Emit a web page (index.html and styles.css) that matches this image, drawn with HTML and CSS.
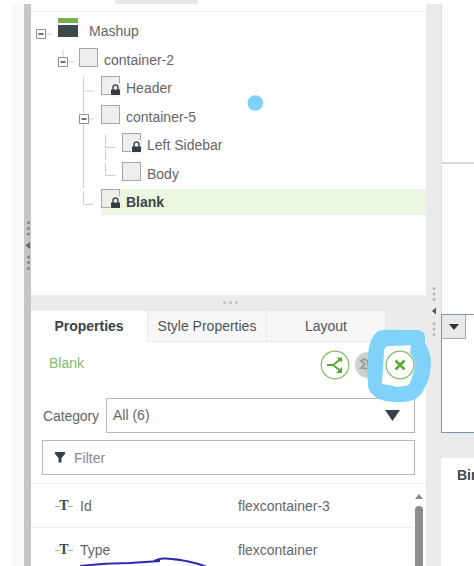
FILE: index.html
```html
<!DOCTYPE html>
<html lang="en">
<head>
    <meta charset="UTF-8">
    <meta name="viewport" content="width=device-width, initial-scale=1.0">
    <title>Mashup Builder</title>
    <link rel="stylesheet" href="styles.css">
</head>
<body>
    <div class="top-strip"><div class="top-tab"></div></div>
    <div class="builder">
        <div class="rail"></div>
        <div class="left-bar">
            <svg width="7" height="50" viewBox="0 0 7 50">
                <g fill="#858585"><circle cx="4.5" cy="1.5" r="1.5"/><circle cx="4.5" cy="7.5" r="1.5"/><circle cx="4.5" cy="13" r="1.5"/><circle cx="4.5" cy="36" r="1.5"/><circle cx="4.5" cy="41.5" r="1.5"/><circle cx="4.5" cy="47.5" r="1.5"/></g>
                <path d="M6 21v7L1.5 24.5z" fill="#666"/>
            </svg>
        </div>
        <div class="panel">
            <div class="tree">
                <!-- connector lines and expanders -->
                <svg class="branches" width="120" height="215" viewBox="31 0 120 215" fill="none">
                    <path d="M46 34h6M63 50v7M68 62h6M83.5 77v36M83.5 91h10M89 119h5M83.5 124v64M83.5 191v13.5h10M105.5 134v26M105.5 147.5h10M105.5 163v12.5h10" stroke="#cfcfcf"/>
                    <g fill="#fff" stroke="#909090"><path d="M36.5 29.5h9v9h-9zM58.5 57.5h9v9h-9zM79.5 114.5h9v9h-9z"/></g>
                    <path d="M38.5 34h5M60.5 62h5M81.5 119h5" stroke="#444" stroke-width="1.3"/>
                </svg>
                <div class="node root">
                    <svg width="20" height="20"><path d="M0 0h20v5H0z" fill="#78ad50"/><path d="M0 7h20v12H0z" fill="#3c484c"/></svg>
                    <span>Mashup</span>
                </div>
                <div class="node level-1"><i class="box"></i><span>container-2</span></div>
                <div class="node level-2"><i class="box"><svg class="lock" width="11" height="14"><path d="M3 7V4.5a2.5 2.5 0 0 1 5 0V7" fill="none" stroke="#444b50" stroke-width="1.5"/><path d="M1 6.5h9V12H1z" fill="#363d42"/></svg></i><span>Header</span></div>
                <div class="node level-2"><i class="box"></i><span>container-5</span></div>
                <div class="node level-3"><i class="box"><svg class="lock" width="11" height="14"><path d="M3 7V4.5a2.5 2.5 0 0 1 5 0V7" fill="none" stroke="#444b50" stroke-width="1.5"/><path d="M1 6.5h9V12H1z" fill="#363d42"/></svg></i><span>Left Sidebar</span></div>
                <div class="node level-3"><i class="box"></i><span>Body</span></div>
                <div class="node level-2 selected"><i class="box"><svg class="lock" width="11" height="14"><path d="M3 7V4.5a2.5 2.5 0 0 1 5 0V7" fill="none" stroke="#444b50" stroke-width="1.5"/><path d="M1 6.5h9V12H1z" fill="#363d42"/></svg></i><span>Blank</span></div>
            </div>
            <div class="splitter"><i></i><i></i><i></i></div>
            <div class="tabs">
                <div class="tab active">Properties</div>
                <div class="tab">Style Properties</div>
                <div class="tab">Layout</div>
            </div>
            <div class="widget">
                <span class="widget-name">Blank</span>
                <svg width="96" height="32" viewBox="320 349 96 32" fill="none">
                    <circle cx="335" cy="365" r="13.8" fill="#fff" stroke="#83bd68" stroke-width="1.2"/>
                    <path d="M327 365h6l7-5.5M333 365l7 5.5" stroke="#55a630" stroke-width="1.8"/>
                    <path d="M336.5 357.5h5.5v5zM342 367v6h-6z" fill="#55a630"/>
                    <circle cx="368" cy="365" r="13" fill="#d0d0d0"/>
                    <path d="M361 361l3-2 4 2v8l-7-1 4-4z" stroke="#999" stroke-width="1.8"/>
                    <circle cx="400" cy="365" r="13.8" fill="#fff" stroke="#83bd68" stroke-width="1.2"/>
                    <path d="M395.5 360.5l9 9M404.5 360.5l-9 9" stroke="#5fab38" stroke-width="2.8"/>
                </svg>
            </div>
            <div class="category">
                <span>Category</span>
                <div class="select">All (6)<svg width="15" height="11"><path d="M0 0h15L7.5 11z" fill="#354244"/></svg></div>
            </div>
            <div class="filter">
                <svg width="10" height="11"><path d="M0 0h10v2L6.5 6v4.5h-3V6L0 2z" fill="#374044"/></svg>
                <span>Filter</span>
            </div>
            <div class="properties">
                <div class="rows">
                    <div class="row"><div class="key"><b class="type-icon">T</b>Id</div><div>flexcontainer-3</div></div>
                    <div class="row"><div class="key"><b class="type-icon">T</b>Type</div><div>flexcontainer</div></div>
                </div>
                <div class="scrollbar">
                    <svg width="8" height="5"><path d="M0 5h8L4 0z" fill="#888"/></svg>
                    <div class="thumb"></div>
                </div>
            </div>
        </div>
        <div class="divider">
            <svg width="8" height="50" viewBox="0 0 8 50">
                <g fill="#b5b5b5"><circle cx="4" cy="1.5" r="1.5"/><circle cx="4" cy="7" r="1.5"/><circle cx="4" cy="12.5" r="1.5"/><circle cx="4" cy="36.5" r="1.5"/><circle cx="4" cy="42" r="1.5"/><circle cx="4" cy="47.5" r="1.5"/></g>
                <path d="M6 20.5v7L2 24z" fill="#555"/>
            </svg>
        </div>
        <div class="canvas">
            <div class="ruler"></div>
            <div class="blank-area"></div>
            <div class="container-box"><div class="menu-button"><svg width="10" height="6"><path d="M0 0h10L5 6z" fill="#333"/></svg></div></div>
            <div class="gap"></div>
            <div class="bindings">Bindings</div>
        </div>
    </div>
    <!-- pen marks over the page -->
    <svg class="marks" width="474" height="566" fill="none">
        <circle cx="255.3" cy="103" r="7.8" fill="#80d2fb"/>
        <path fill-rule="evenodd" fill="#80d2fb" d="M378 331Q385 329 397 330L418 330Q426 332 425 338L425 343Q431 353 431 364Q430 379 425 387Q421 397 413 400Q404 403 394 402Q379 401 373 395Q367 390 368 382Q366 372 368 363Q367 340 378 331ZM388 346Q384 347 384 352L382 384Q391 385 397 387L408 385.500Q411 382 412 377Q415 370 414.500 364Q414 357 410 353L411 345Q397 346 388 346Z"/>
        <path d="M80 566Q105 563 130 563L160 561M153 562Q158 558 166 558.5Q190 560 207 567" stroke="#3028ad" stroke-width="2"/>
    </svg>
</body>
</html>
```

FILE: styles.css
```css
* {
    box-sizing: border-box;
}
body {
    margin: 0;
    height: 566px;
    overflow: hidden;
    position: relative;
    background: #fff;
    color: #666;
    font-family: "Liberation Sans", Arial, sans-serif;
    font-size: 14px;
    line-height: 20px;
}
svg {
    display: block;
    flex-shrink: 0;
}
.top-strip {
    height: 4px;
    padding-left: 115px;
}
.top-tab {
    width: 83px;
    height: 4px;
    background: #e8e8e8;
}
.builder {
    display: flex;
    height: 562px;
    padding-left: 12px;
}
.rail {
    width: 12px;
    background: #fafafa;
}
.left-bar {
    width: 7px;
    padding-top: 217px;
    background: #c6c6c6;
}
.panel {
    width: 395px;
    background: #fefefe;
}

/* Widget tree */
.tree {
    position: relative;
    height: 291px;
    padding-top: 13px;
}
.tree::before {
    content: "";
    position: absolute;
    top: 7px;
    width: 100%;
    height: 1px;
    background: #f0f0f0;
}
.branches {
    position: absolute;
    top: -4px;
    left: 0;
}
.node {
    position: relative;
    display: flex;
    height: 28.5px;
    gap: 6px;
}
.node span {
    padding-top: 4px;
}
.root {
    padding-left: 27px;
    gap: 11px;
}
.root svg {
    margin-top: 1px;
}
.level-1 {
    margin-left: 48px;
}
.level-2 {
    margin-left: 70px;
}
.level-3 {
    margin-left: 91px;
}
.box {
    position: relative;
    width: 19px;
    height: 19px;
    margin-top: 2px;
    border: 1px solid #a5a5a5;
    background: #eeeeef;
}
.lock {
    position: absolute;
    right: -2px;
    bottom: -3px;
    background: #f4f4f4;
}
.selected {
    height: 26px;
    margin-top: 1px;
    background: #ebf7e0;
    color: #3b4447;
    font-weight: bold;
}
.selected .box {
    margin-top: 0;
}
.selected .lock {
    background: #ebf7e0;
}
.selected span {
    padding-top: 3px;
}

/* Properties panel */
.splitter {
    display: flex;
    justify-content: center;
    gap: 3px;
    height: 16px;
    padding: 6px 0 0 3px;
    background: #ebebeb;
}
.splitter i {
    width: 3px;
    height: 3px;
    border-radius: 50%;
    background: #bcbcbc;
}
.tabs {
    display: flex;
    height: 31px;
    gap: 1px;
    background: #ebebeb;
}
.tab {
    width: 118px;
    height: 30px;
    padding-top: 5px;
    background: #f7f7f7;
    color: #505557;
    text-align: center;
}
.tab.active {
    width: 116px;
    height: 31px;
    background: #fefefe;
    color: #3b4447;
    font-weight: bold;
}
.widget {
    display: flex;
    justify-content: space-between;
    height: 56px;
    padding: 7px 10px 0 18px;
}
.widget-name {
    padding-top: 4px;
    color: #82bb6c;
}
.category {
    display: flex;
    align-items: center;
    justify-content: space-between;
    height: 35px;
    margin: 0 11px 0 12px;
}
.category > span {
    letter-spacing: -0.1px;
}
.select {
    display: flex;
    align-items: center;
    justify-content: space-between;
    width: 309px;
    height: 35px;
    padding: 0 14px 1px 6px;
    border: 1px solid #b8b8b8;
}
.filter {
    display: flex;
    align-items: center;
    gap: 9px;
    height: 35px;
    margin: 7px 11px 0;
    padding-left: 12px;
    border: 1px solid #b8b8b8;
    color: #8a8a8a;
}
.properties {
    display: flex;
    height: 83px;
    margin-top: 8px;
    border-top: 1px solid #eaeaea;
    overflow: hidden;
}
.rows {
    width: 382px;
}
.row {
    display: grid;
    grid-template-columns: 183px 1fr;
    align-items: center;
    height: 44px;
    padding-left: 24px;
    border-bottom: 1px solid #eee;
}
.key {
    display: flex;
    gap: 7px;
}
.type-icon {
    width: 18px;
    color: #3f484b;
    font-family: "Liberation Serif", serif;
    font-size: 14px;
    text-align: center;
    background: linear-gradient(#98bd83, #98bd83) 0 10px / 5px 1px no-repeat, linear-gradient(#98bd83, #98bd83) 100% 10px / 5px 1px no-repeat;
}
.scrollbar {
    display: flex;
    flex-direction: column;
    align-items: center;
    gap: 7px;
    width: 12px;
    padding-top: 10px;
}
.thumb {
    flex: 1;
    width: 8px;
    border-radius: 4px 4px 0 0;
    background: #8c8c8c;
}

/* Canvas on the right */
.divider {
    width: 15px;
    padding: 283px 0 0 4px;
    background: #ebebeb;
}
.canvas {
    flex: 1;
    min-width: 0;
    overflow: hidden;
    background: #fff;
}
.ruler {
    height: 160px;
    border-bottom: 2px solid #d8d8d8;
}
.ruler,
.blank-area {
    border-left: 1px solid #dedede;
}
.blank-area {
    height: 150px;
}
.container-box {
    height: 119px;
    border: 1px solid #7d94b5;
    border-right: 0;
}
.menu-button {
    display: flex;
    align-items: center;
    justify-content: center;
    width: 24px;
    height: 24px;
    border: solid #aaa;
    border-width: 0 1px 1px 0;
    background: #e9e9e9;
}
.gap {
    height: 25px;
    background: #ebebeb;
}
.bindings {
    padding: 7px 0 0 16px;
    color: #3f484b;
    font-weight: bold;
}

.marks {
    position: absolute;
    top: 0;
    left: 0;
    pointer-events: none;
}
```
